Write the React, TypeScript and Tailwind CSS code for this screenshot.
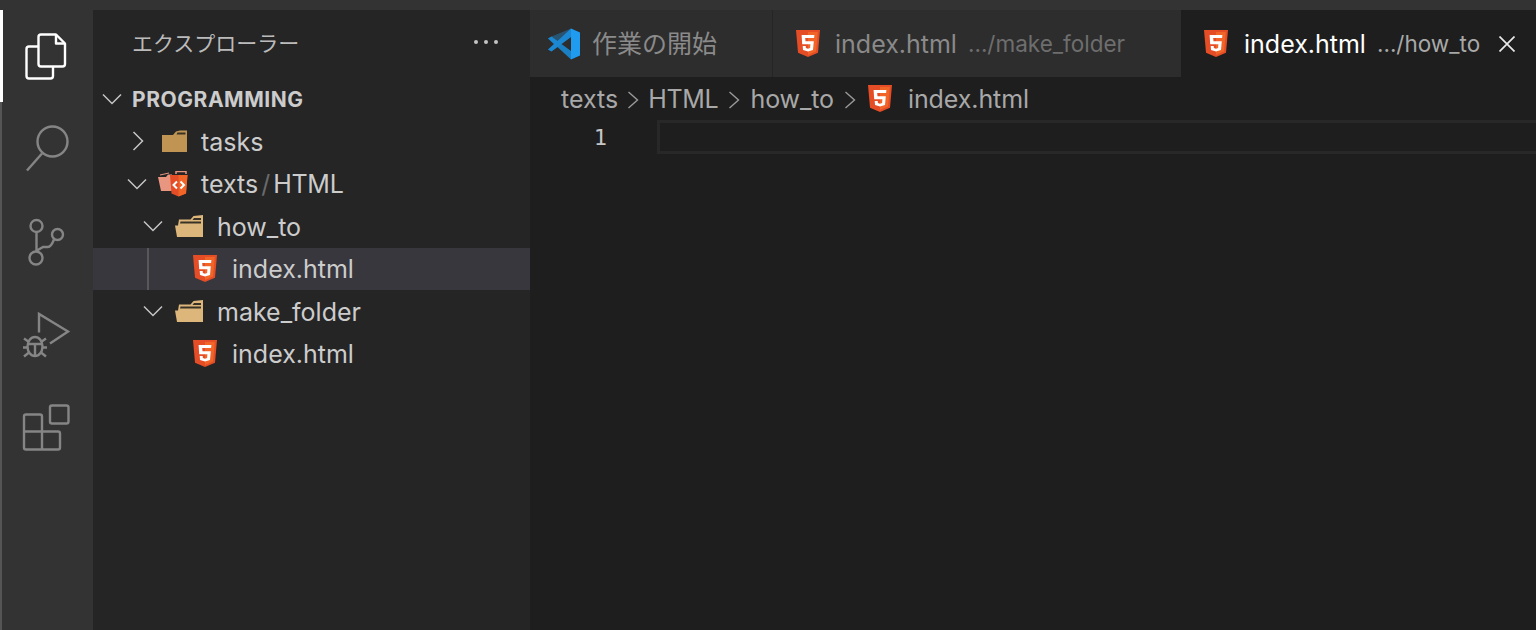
import React from "react";

const Html5 = ({ className = "" }: { className?: string }) => (
  <svg viewBox="0 0 24 27" className={"w-[24px] h-[27px] shrink-0 " + className}>
    <path d="M0 0H24L22 22.8L12 27L2 22.8Z" fill="#E44D26" />
    <path d="M12 2V25L20 21.6L21.8 2Z" fill="#F16529" />
    <path d="M5.6 5H18.4L18.1 8H9.2L9.5 11.2H17.8L17 20L12 21.6L7 20L6.7 16H9.7L9.9 18L12 18.7L14.1 18L14.4 14.2H6.2Z" fill="#fff" />
  </svg>
);

const Chevron = ({ down, className = "" }: { down?: boolean; className?: string }) => (
  <svg viewBox="0 0 20 20" className={"w-[20px] h-[20px] shrink-0 " + className} fill="none" stroke="#c5c5c5" strokeWidth="1.5">
    {down ? <path d="M1 5.5L10 14.5L19 5.5" /> : <path d="M5.5 1L14.5 10L5.5 19" />}
  </svg>
);

const Crumb = ({ className = "" }: { className?: string }) => (
  <svg viewBox="0 0 12 18" className={"w-[12px] h-[18px] shrink-0 " + className} fill="none" stroke="#9a9a9a" strokeWidth="1.4">
    <path d="M1.5 1L10.5 9L1.5 17" />
  </svg>
);

const FolderOpen = () => (
  <svg viewBox="0 0 28 22" className="w-[28px] h-[22px] shrink-0">
    <path d="M0 10.5H3L4 4.5H15.5L18.5 1L28 0V22H2Z" fill="#DCB67A" />
    <path d="M5.5 6.5H26V8.5H5Z" fill="#3a3226" />
    <path d="M19 3H26V5H17.5Z" fill="#3a3226" />
  </svg>
);

const FolderClosed = () => (
  <svg viewBox="0 0 25 22" className="w-[25px] h-[22px] shrink-0">
    <path d="M0 5H11L14 1.5L18 0.5H25V22H0Z" fill="#C09553" />
    <path d="M15.5 2.5H23.5V4.5H14.5Z" fill="#3a3226" />
  </svg>
);

const FolderHtml = () => (
  <svg viewBox="0 0 30 26" className="w-[30px] h-[26px] shrink-0">
    <path d="M0 6H8L10 3.5H14V20H3Z" fill="#E8967F" />
    <path d="M2 4L11 2" stroke="#E8967F" strokeWidth="1" />
    <path d="M18 3V0.5H28V3" fill="none" stroke="#E8967F" strokeWidth="1.5" />
    <path d="M12 4H29.5L28 22.5L20.5 25.5L13.5 22.5Z" fill="#E44D26" />
    <path d="M20.5 4V25.5L28 22.5L29.5 4Z" fill="#F16529" />
    <path d="M19 10.5L15.5 14L19 17.5M22.5 10.5L26 14L22.5 17.5" fill="none" stroke="#fff" strokeWidth="2" />
  </svg>
);

const VsCode = () => (
  <svg viewBox="0 0 32 32" className="w-[32px] h-[32px] shrink-0">
    <path d="M23 0.5L32 4.5V27.5L23 31.5Z" fill="#1F9CF0" />
    <path d="M23 0.5L9.5 13L3.5 8.5L0 10.5L6 16L0 21.5L3.5 23.5L9.5 19L23 31.5V23L13.5 16L23 9Z" fill="#1B7FC4" />
    <path d="M3.5 8.5L0 10.5L6 16L0 21.5L3.5 23.5L23 9V0.5Z" fill="#1F9CF0" opacity="0.35" />
  </svg>
);

const icon = "w-[50px] h-[50px]";

const FilesIcon = () => (
  <svg viewBox="21 31.5 50 50" className={icon} fill="none" stroke="#fff" strokeWidth="2.4" strokeLinejoin="round">
    <path d="M38 46H29Q26.5 46 26.5 48.5V75.5Q26.5 78 29 78H50.5Q53 78 53 75.5V66" />
    <path d="M41 34H56L65 43V63.5Q65 66 62.5 66H41Q38.5 66 38.5 63.5V36.5Q38.5 34 41 34Z" />
    <path d="M56 34V43H65" />
  </svg>
);
const SearchIcon = () => (
  <svg viewBox="21 124.5 50 50" className={icon} fill="none" stroke="#858585" strokeWidth="2.4">
    <circle cx="52.5" cy="141" r="15" />
    <path d="M27 170L42 153" />
  </svg>
);
const GitIcon = () => (
  <svg viewBox="21 217.5 50 50" className={icon} fill="none" stroke="#858585" strokeWidth="2.4">
    <circle cx="36.5" cy="225.5" r="6" />
    <circle cx="57.5" cy="234" r="5.5" />
    <circle cx="36" cy="257.5" r="6.5" />
    <path d="M36.5 231.5V251M37 250L43 246.5H48Q51 246.5 54 239" />
  </svg>
);
const DebugIcon = () => (
  <svg viewBox="21 310.5 50 50" className={icon} fill="none" stroke="#858585" strokeWidth="2.4">
    <path d="M39 332V313.5L68 331L50 343" />
    <ellipse cx="35" cy="346" rx="7.5" ry="9.5" />
    <path d="M27.5 343.5H42.5M35 343.5V355M24 338L29 341.5M46 338L41 341.5M23 347H27.5M47 347H42.5M24 356L29 352M46 356L41 352" />
  </svg>
);
const ExtIcon = () => (
  <svg viewBox="21 403.5 50 50" className={icon} fill="none" stroke="#858585" strokeWidth="2.4" strokeLinejoin="round">
    <rect x="50" y="405" width="18.5" height="18" rx="2" />
    <path d="M26 414H40Q42 414 42 416V431H58Q60 431 60 433V447Q60 449 58 449H26Q24 449 24 447V416Q24 414 26 414ZM24 431H42V449" />
  </svg>
);

export default function App() {
  return (
    <div className="w-[1536px] h-[630px] overflow-hidden flex flex-col bg-[#333333] font-['Inter','Noto_Sans_CJK_JP',sans-serif] text-[#cccccc] text-[25px] leading-none">
      <div className="h-[10px] shrink-0 bg-[#333333]" />
      <div className="flex flex-1 min-h-0">
        {/* Activity bar */}
        <div className="w-[93px] shrink-0 flex flex-col bg-[#333333] border-l-[2px] border-[#555555]">
          <div className="h-[93px] flex items-center justify-center relative pr-[4px]">
            <div className="absolute left-[-2px] top-0 w-[3px] h-[92px] bg-white" />
            <FilesIcon />
          </div>
          <div className="h-[93px] flex items-center justify-center pr-[4px]"><SearchIcon /></div>
          <div className="h-[93px] flex items-center justify-center pr-[4px]"><GitIcon /></div>
          <div className="h-[93px] flex items-center justify-center pr-[4px]"><DebugIcon /></div>
          <div className="h-[93px] flex items-center justify-center pr-[4px]"><ExtIcon /></div>
        </div>

        {/* Sidebar */}
        <div className="w-[437px] shrink-0 flex flex-col bg-[#252526]">
          <div className="h-[67px] shrink-0 flex items-center justify-between pl-[39px] pr-[32px] pb-[3px] text-[#bbbbbb] text-[21px] font-['Noto_Sans_CJK_JP','Inter',sans-serif]">
            <span>エクスプローラー</span>
            <span className="flex gap-[6px]">
              <span className="w-[4px] h-[4px] rounded-full bg-[#c5c5c5]" />
              <span className="w-[4px] h-[4px] rounded-full bg-[#c5c5c5]" />
              <span className="w-[4px] h-[4px] rounded-full bg-[#c5c5c5]" />
            </span>
          </div>
          <div className="h-[43px] shrink-0 flex items-center pl-[9px]">
            <Chevron down className="mr-[10px]" />
            <span className="pt-[2px] font-bold text-[21px] tracking-[0.55px] text-[#cccccc]">PROGRAMMING</span>
          </div>
          <div className="h-[42.5px] flex items-center pl-[35px]">
            <Chevron className="mr-[14px]" />
            <FolderClosed />
            <span className="ml-[14px] pt-[2px]">tasks</span>
          </div>
          <div className="h-[42.5px] flex items-center pl-[34px]">
            <Chevron down className="mr-[11px]" />
            <FolderHtml />
            <span className="ml-[13px] pt-[2px]">texts</span>
            <span className="mx-[3px] pt-[2px] text-[#6a6a6a]">/</span>
            <span className="pt-[2px] tracking-[-0.3px]">HTML</span>
          </div>
          <div className="h-[42.5px] flex items-center pl-[50px]">
            <Chevron down className="mr-[12px]" />
            <FolderOpen />
            <span className="ml-[14px] pt-[2px]">how_to</span>
          </div>
          <div className="h-[42.5px] flex items-center pl-[100px] bg-[#37373d] relative">
            <div className="absolute left-[54px] top-0 bottom-0 w-[2px] bg-[#585858]" />
            <Html5 />
            <span className="ml-[15px] pt-[2px]">index.html</span>
          </div>
          <div className="h-[42.5px] flex items-center pl-[50px]">
            <Chevron down className="mr-[12px]" />
            <FolderOpen />
            <span className="ml-[14px] pt-[2px]">make_folder</span>
          </div>
          <div className="h-[42.5px] flex items-center pl-[100px]">
            <Html5 />
            <span className="ml-[15px] pt-[2px]">index.html</span>
          </div>
        </div>

        {/* Editor */}
        <div className="flex-1 min-w-0 flex flex-col bg-[#1e1e1e]">
          <div className="h-[67px] shrink-0 flex bg-[#252526]">
            <div className="w-[243px] flex items-center pl-[18px] bg-[#2d2d2d] border-r border-[#252526] text-[#8a8a8a]">
              <VsCode />
              <span className="ml-[12px] pb-[2px] font-['Noto_Sans_CJK_JP',sans-serif]">作業の開始</span>
            </div>
            <div className="w-[408px] flex items-center pl-[23px] bg-[#2d2d2d] text-[#8a8a8a]">
              <Html5 />
              <span className="ml-[15px] pt-[1px]">index.html</span>
              <span className="ml-[11px] pt-[1px] text-[22.5px] text-[#6e6e6e]">.../make_folder</span>
            </div>
            <div className="w-[355px] flex items-center pl-[23px] bg-[#1e1e1e] text-white">
              <Html5 />
              <span className="ml-[16px] pt-[1px]">index.html</span>
              <span className="ml-[11px] pt-[1px] text-[22.5px] text-[#a8a8a8]">.../how_to</span>
              <svg viewBox="0 0 16 16" className="w-[16px] h-[16px] ml-[19px]" fill="none" stroke="#e8e8e8" strokeWidth="1.7">
                <path d="M0.5 0.5L15.5 15.5M15.5 0.5L0.5 15.5" />
              </svg>
            </div>
          </div>
          <div className="h-[43px] shrink-0 flex items-center pl-[31px] pt-[2px] text-[#a8a8a8]">
            <span>texts</span>
            <Crumb className="mx-[9px]" />
            <span className="tracking-[-0.3px]">HTML</span>
            <Crumb className="mx-[10px]" />
            <span className="tracking-[-0.1px]">how_to</span>
            <Crumb className="ml-[10px] mr-[12px]" />
            <Html5 className="mb-[2px]" />
            <span className="ml-[16px] tracking-[-0.1px]">index.html</span>
          </div>
          <div className="h-[34px] shrink-0 flex items-center">
            <span className="w-[77px] shrink-0 pt-[1px] text-right text-[22px] text-[#c6c6c6] font-['DejaVu_Sans_Mono',monospace]">1</span>
            <div className="flex-1 h-full ml-[50px] border-[3px] border-r-0 border-[#282828]" />
          </div>
        </div>
      </div>
    </div>
  );
}
